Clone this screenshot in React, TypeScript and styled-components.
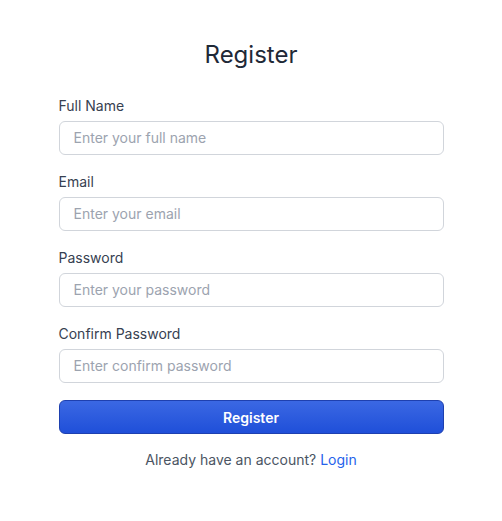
import React from "react";
import styled, { createGlobalStyle } from "styled-components";

const GlobalStyle = createGlobalStyle`
  body {
    margin: 0;
    background: #ffffff;
    font-family: Inter, "Noto Sans", sans-serif;
  }
`;

const Page = styled.main`
  display: flex;
  justify-content: center;
  padding-top: 39px;
`;

const Form = styled.form`
  width: 385px;
  display: flex;
  flex-direction: column;
`;

const Title = styled.h1`
  margin: 0 0 25px;
  font-size: 24px;
  line-height: 32px;
  font-weight: 400;
  color: #1f2937;
  text-align: center;
`;

const Field = styled.div`
  display: flex;
  flex-direction: column;
  margin-bottom: 17px;
`;

const Label = styled.label`
  font-size: 14px;
  line-height: 20px;
  font-weight: 400;
  color: #374151;
  margin-bottom: 5px;
`;

const Input = styled.input`
  box-sizing: border-box;
  height: 34px;
  padding: 0 14px 1px;
  border: 1px solid #d1d5db;
  border-radius: 6px;
  font-family: inherit;
  font-size: 14px;
  color: #111827;
  outline: none;
  &::placeholder {
    color: #9ca3af;
  }
`;

const Button = styled.button`
  height: 34px;
  border: 1px solid #1e40af;
  border-radius: 6px;
  background: linear-gradient(180deg, #3b68e3 0%, #1f4fd9 100%);
  color: #ffffff;
  font-family: inherit;
  font-size: 14px;
  font-weight: 600;
  cursor: pointer;
`;

const Footer = styled.p`
  margin: 16px 0 0;
  font-size: 14px;
  line-height: 20px;
  color: #4b5563;
  text-align: center;
`;

const LoginLink = styled.a`
  color: #2563eb;
  font-weight: 400;
  text-decoration: none;
`;

const fields = [
  { label: "Full Name", type: "text", placeholder: "Enter your full name" },
  { label: "Email", type: "email", placeholder: "Enter your email" },
  { label: "Password", type: "password", placeholder: "Enter your password" },
  { label: "Confirm Password", type: "password", placeholder: "Enter confirm password" },
];

export default function App() {
  return (
    <>
      <GlobalStyle />
      <Page>
        <Form onSubmit={(e) => e.preventDefault()}>
          <Title>Register</Title>
          {fields.map((f) => (
            <Field key={f.label}>
              <Label>{f.label}</Label>
              <Input type={f.type} placeholder={f.placeholder} />
            </Field>
          ))}
          <Button type="submit">Register</Button>
          <Footer>
            Already have an account? <LoginLink href="#">Login</LoginLink>
          </Footer>
        </Form>
      </Page>
    </>
  );
}
